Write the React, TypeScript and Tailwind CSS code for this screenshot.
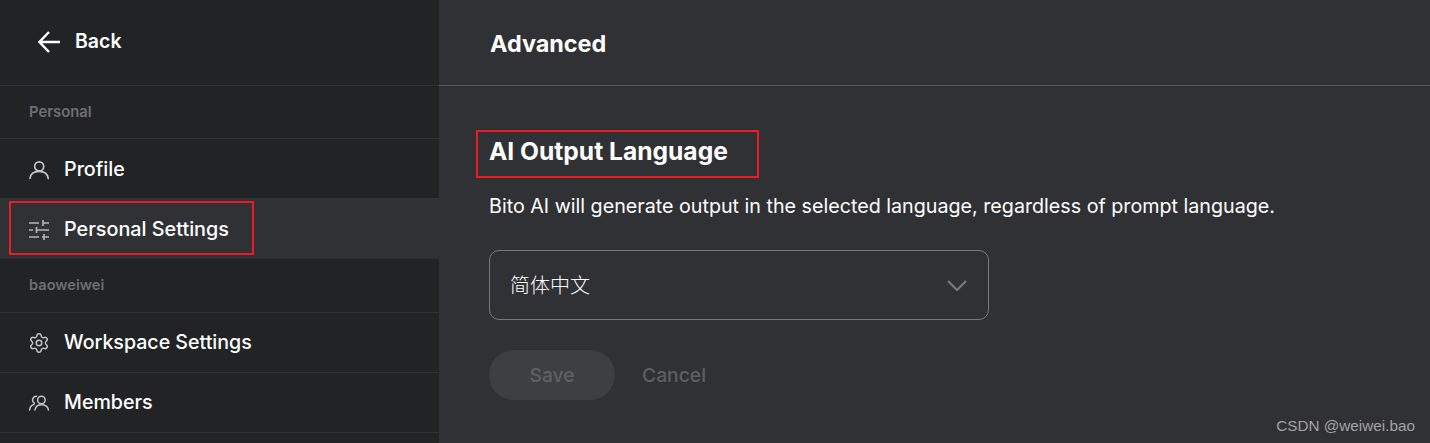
import { Settings } from "lucide-react";
import React from "react";

const BackIcon = () => (
  <svg width="22" height="22" viewBox="0 0 22 22" fill="none" stroke="currentColor" strokeWidth="2.4">
    <path d="M11 1L1.5 11L11 21M2 11H22" />
  </svg>
);

const ProfileIcon = () => (
  <svg width="20" height="20" viewBox="0 0 20 20" fill="none" stroke="#c4c5c6" strokeWidth="1.7" strokeLinecap="round">
    <circle cx="10.2" cy="6.4" r="4.5" />
    <path d="M1 18.5C1.5 14 5 11.3 10.2 11.3S18.7 14 19.2 18.5" />
  </svg>
);

const SlidersIcon = () => (
  <svg width="20" height="20" viewBox="0 0 20 20" fill="none" stroke="#b4b5b6" strokeWidth="1.7">
    <path d="M0 3H10M14 3H20M14 0V6M0 10H4M8 10H20M7.5 7V13M0 17H10M13 17H20M15 14V20" />
  </svg>
);

const MembersIcon = () => (
  <svg width="20" height="20" viewBox="0 0 20 20" fill="none" stroke="#c4c5c6" strokeWidth="1.5" strokeLinecap="round">
    <circle cx="12.4" cy="7" r="3.8" />
    <path d="M6 17C6.5 13.5 9 11.8 12.5 11.8S18.8 13.5 19.5 17" />
    <path d="M7.6 3.2A3.8 3.8 0 0 0 5.4 10.2M0.6 17C1 14 2.6 12.2 5 11.6" />
  </svg>
);

const App = () => {
  return (
    <div className="relative flex h-[443px] w-[1430px] overflow-hidden bg-[#303134] font-['Inter','Liberation_Sans',sans-serif] text-white">
      {/* Sidebar */}
      <aside className="w-[439px] shrink-0 bg-[#222325]">
        <div className="flex h-[86px] items-center gap-[15px] border-b border-[#303134] pb-[2px] pl-[38px] text-[19.5px] font-semibold">
          <BackIcon />
          Back
        </div>
        <div className="flex h-[53px] items-center border-b border-[#303134] pl-[29px] pt-[1px] text-[14.8px] font-semibold text-[#6b7073]">
          Personal
        </div>
        <div className="flex h-[59px] items-center gap-[15px] pl-[29px] pt-[2px] text-[19.7px] font-medium">
          <ProfileIcon />
          Profile
        </div>
        <div className="flex h-[61px] items-center gap-[15px] bg-[#303134] pl-[29px] pt-[2px] text-[19.8px] font-medium">
          <SlidersIcon />
          Personal Settings
        </div>
        <div className="flex h-[54px] items-center border-b border-[#303134] pl-[29px] text-[14.6px] font-semibold text-[#6b7073]">
          baoweiwei
        </div>
        <div className="flex h-[60px] items-center gap-[14px] border-b border-[#303134] pl-[28px] text-[19.6px] font-medium">
          <Settings className="h-[22px] w-[22px] text-[#c4c5c6]" strokeWidth={1.6} />
          Workspace Settings
        </div>
        <div className="flex h-[60px] items-center gap-[15px] border-b border-[#303134] pl-[29px] text-[19.6px] font-medium">
          <MembersIcon />
          Members
        </div>
      </aside>

      {/* Main */}
      <main className="flex-1">
        <div className="flex h-[86px] items-center border-b border-[#55575a] pl-[51px] pt-[2px] text-[23.4px] font-bold">
          Advanced
        </div>
        <div className="pl-[50px] pt-[47px]">
          <h2 className="text-[24.6px] font-bold leading-[36px]">AI Output Language</h2>
          <p className="mt-[23px] text-[19.7px] leading-[28px]">
            Bito AI will generate output in the selected language, regardless of prompt language.
          </p>
          <div className="mt-[30px] flex h-[70px] w-[500px] items-center justify-between rounded-[10px] border border-[#77797b] pl-[20px] pr-[21px] font-['Noto_Sans_CJK_SC',sans-serif] text-[20px] font-light">
            简体中文
            <svg width="20" height="11" viewBox="0 0 20 11" fill="none" stroke="#77797b" strokeWidth="2.2">
              <path d="M1 1L10 10L19 1" />
            </svg>
          </div>
          <div className="mt-[30px] flex items-center gap-[27px] text-[19.3px] font-medium text-[#5c6063]">
            <button className="h-[50px] w-[126px] rounded-full bg-[#3d4043]">Save</button>
            <span>Cancel</span>
          </div>
        </div>
      </main>

      {/* Annotations on top of the screenshot */}
      <div className="absolute left-[9px] top-[201px] h-[54px] w-[245px] border-2 border-[#ed1c24]" />
      <div className="absolute left-[476px] top-[130px] h-[48px] w-[283px] border-2 border-[#ed1c24]" />
      <div className="absolute bottom-[5px] right-[15px] font-['Liberation_Sans',sans-serif] text-[15.3px] text-[#a3a3a3]">
        CSDN @weiwei.bao
      </div>
    </div>
  );
};

export default App;
